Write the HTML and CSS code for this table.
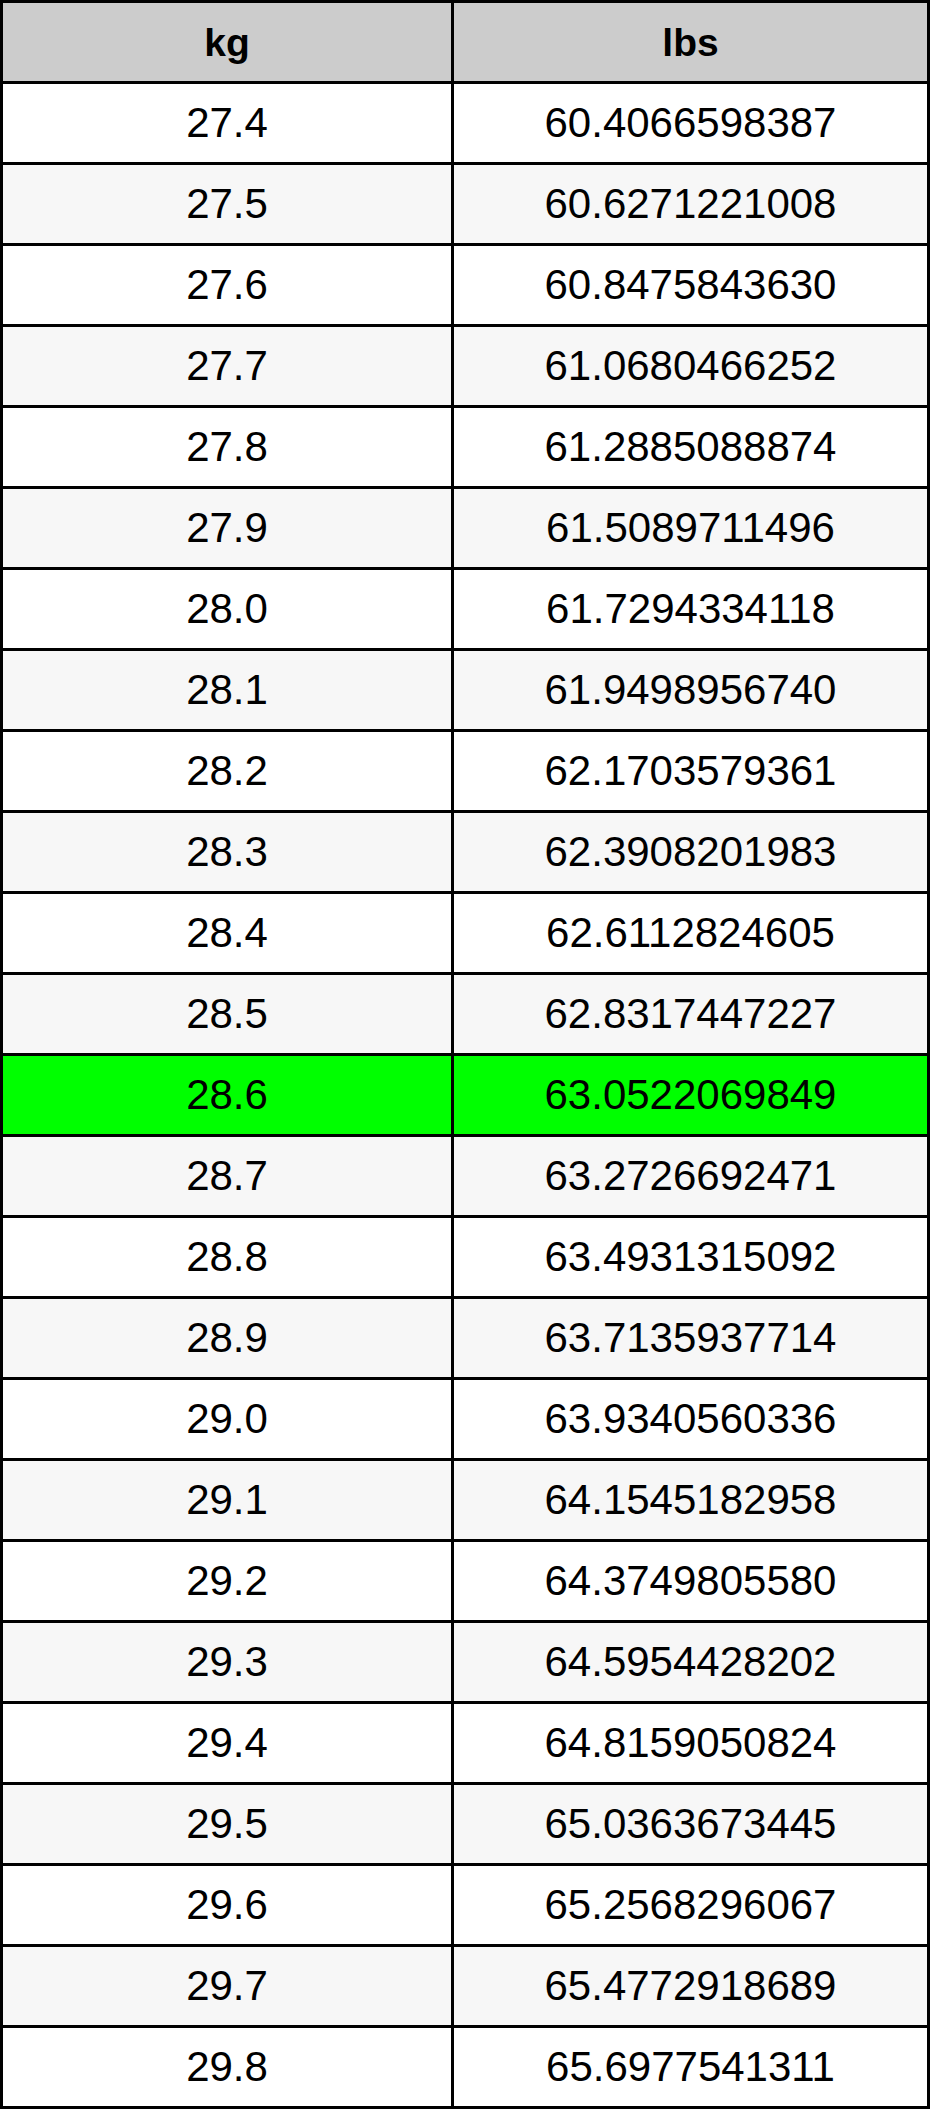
FILE: index.html
```html
<!DOCTYPE html>
<html>
<head>
<meta charset="utf-8">
<title>kg to lbs</title>
<link rel="stylesheet" href="styles.css">
</head>
<body>
<table class="conv">
<thead>
<tr><th class="c1">kg</th><th class="c2">lbs</th></tr>
</thead>
<tbody>
<tr><td>27.4</td><td>60.4066598387</td></tr>
<tr class="alt"><td>27.5</td><td>60.6271221008</td></tr>
<tr><td>27.6</td><td>60.8475843630</td></tr>
<tr class="alt"><td>27.7</td><td>61.0680466252</td></tr>
<tr><td>27.8</td><td>61.2885088874</td></tr>
<tr class="alt"><td>27.9</td><td>61.5089711496</td></tr>
<tr><td>28.0</td><td>61.7294334118</td></tr>
<tr class="alt"><td>28.1</td><td>61.9498956740</td></tr>
<tr><td>28.2</td><td>62.1703579361</td></tr>
<tr class="alt"><td>28.3</td><td>62.3908201983</td></tr>
<tr><td>28.4</td><td>62.6112824605</td></tr>
<tr class="alt"><td>28.5</td><td>62.8317447227</td></tr>
<tr class="hl"><td>28.6</td><td>63.0522069849</td></tr>
<tr class="alt"><td>28.7</td><td>63.2726692471</td></tr>
<tr><td>28.8</td><td>63.4931315092</td></tr>
<tr class="alt"><td>28.9</td><td>63.7135937714</td></tr>
<tr><td>29.0</td><td>63.9340560336</td></tr>
<tr class="alt"><td>29.1</td><td>64.1545182958</td></tr>
<tr><td>29.2</td><td>64.3749805580</td></tr>
<tr class="alt"><td>29.3</td><td>64.5954428202</td></tr>
<tr><td>29.4</td><td>64.8159050824</td></tr>
<tr class="alt"><td>29.5</td><td>65.0363673445</td></tr>
<tr><td>29.6</td><td>65.2568296067</td></tr>
<tr class="alt"><td>29.7</td><td>65.4772918689</td></tr>
<tr><td>29.8</td><td>65.6977541311</td></tr>
</tbody>
</table>
</body>
</html>
```

FILE: styles.css
```css
html, body {
  margin: 0;
  padding: 0;
  background: #ffffff;
}

.conv {
  width: 930px;
  border-collapse: separate;
  border-spacing: 3px;
  background: #000000;
  table-layout: fixed;
  font-family: "Liberation Sans", Arial, sans-serif;
  color: #000000;
}

.conv th,
.conv td {
  height: 78px;
  padding: 0;
  text-align: center;
  vertical-align: middle;
  background: #ffffff;
  line-height: 1;
}

.conv th {
  background: #cccccc;
  font-weight: bold;
  font-size: 39px;
}

.conv th.c1 {
  width: 448px;
}

.conv th.c2 {
  width: 473px;
}

.conv td {
  font-size: 42px;
}

.conv tr.alt td {
  background: #f7f7f7;
}

.conv tr.hl td {
  background: #00ff00;
}
```
